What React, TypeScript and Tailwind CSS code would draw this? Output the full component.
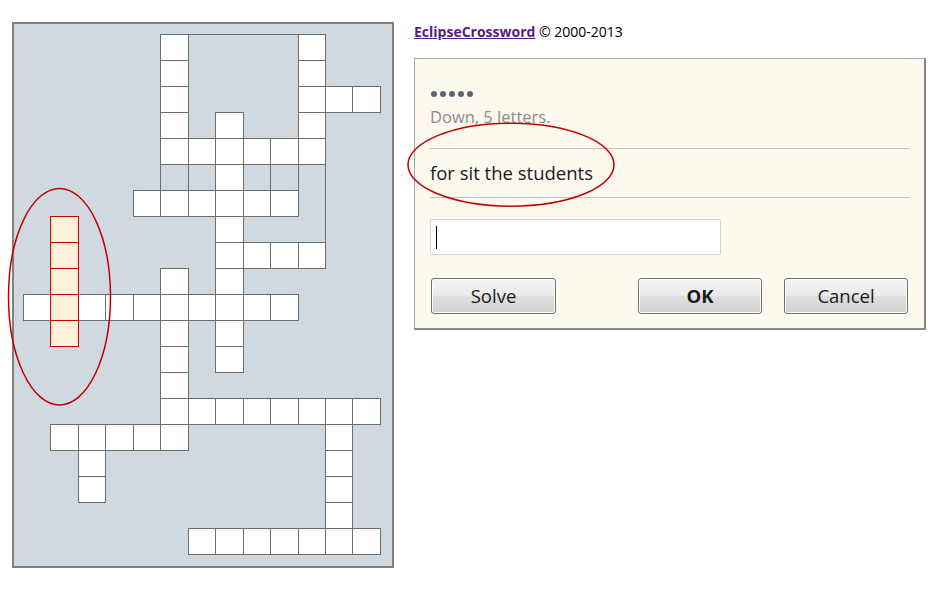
import React from "react";

// grid legend: "." empty, W white cell, H highlighted (active word),
// T gray with top edge, V gray with side edges, R gray with right edge
const rows = [
  ".....WTTTTW..",
  ".....W....W..",
  ".....W....WWW",
  ".....W.W..W..",
  ".....WWWWWW..",
  ".....VVWVVV..",
  "....WWWWWWR..",
  ".H.....W..R..",
  ".H.....WWWW..",
  ".H...W.W.....",
  "WHWWWWWWWW...",
  ".H...W.W.....",
  ".....W.W.....",
  ".....W.......",
  ".....WWWWWWWW",
  ".WWWWW.....W.",
  "..W........W.",
  "..W........W.",
  "...........W.",
  "......WWWWWWW",
];

function Cell({ kind }: { kind: string }) {
  if (kind === ".") return <div />;
  const base = "w-[calc(100%+1px)] h-[calc(100%+1px)]";
  if (kind === "W") return <div className={`${base} bg-white border border-[#6e6e6e]`} />;
  if (kind === "H") return <div className={`${base} relative z-10 bg-[#fff0da] border border-[#cc0000]`} />;
  if (kind === "T") return <div className={`${base} border-t border-[#6e6e6e]`} />;
  if (kind === "V") return <div className={`${base} border-x border-[#6e6e6e]`} />;
  return <div className={`${base} border-r border-[#6e6e6e]`} />;
}

function Button({ label, bold }: { label: string; bold?: boolean }) {
  return (
    <div
      className={
        "flex h-[36px] items-center justify-center rounded-[3px] border border-[#707070] text-[18.5px] text-[#1a1a1a] shadow-[inset_0_0_0_1px_#fbfbfb] bg-[linear-gradient(to_bottom,#f3f3f3_0%,#ececec_48%,#dedede_52%,#d2d2d2_100%)] " +
        (bold ? "font-bold" : "")
      }
    >
      {label}
    </div>
  );
}

export default function App() {
  return (
    <div className="relative flex gap-[20px] pl-[12px] pt-[22px] bg-white h-[600px] font-['Open_Sans',sans-serif]">
      {/* crossword board */}
      <div className="h-[546px] w-[382px] shrink-0 border-2 border-[#808080] bg-[#d0d8e0] pl-[9px] pt-[10px]">
        <div className="grid grid-cols-[repeat(13,27.46px)] grid-rows-[repeat(20,26px)]">
          {rows.map((r, ri) =>
            r.split("").map((k, ci) => <Cell key={`${ri}-${ci}`} kind={k} />)
          )}
        </div>
      </div>

      {/* clue panel */}
      <div className="w-[512px]">
        <div className="mt-px h-[18px] text-[14px] leading-[18px] text-black">
          <a className="font-bold text-[#551a8b] underline">EclipseCrossword</a> © 2000-2013
        </div>
        <div className="mt-[17px] h-[272px] border border-[#a8a8a8] border-r-2 border-b-2 border-r-[#888888] border-b-[#888888] bg-[#fdf9ef] pl-[15px] pr-[14px] pt-[32px]">
          <div className="flex gap-[3px] pl-px">
            {[0, 1, 2, 3, 4].map((i) => (
              <span key={i} className="h-[6px] w-[6px] rounded-full bg-[#5d6679]" />
            ))}
          </div>
          <div className="mt-[10px] text-[16.5px] leading-[20px] text-[#8c8c8c]">Down, 5 letters.</div>
          <div className="mt-[21px] border-t border-[#c2c2c2]" />
          <div className="mt-[12px] text-[18.5px] leading-[24px] text-[#1a1a1a]">for sit the students</div>
          <div className="mt-[12px] border-t border-[#c2c2c2]" />
          <div className="mt-[21px] flex h-[36px] w-[291px] items-center rounded-[2px] border border-[#d4d4d4] bg-white pl-[5px]">
            <span className="h-[23px] w-px bg-black" />
          </div>
          <div className="mt-[23px] flex pl-px pr-[2px]">
            <div className="w-[125px]">
              <Button label="Solve" />
            </div>
            <div className="ml-auto flex gap-[22px]">
              <div className="w-[124px]">
                <Button label="OK" bold />
              </div>
              <div className="w-[124px]">
                <Button label="Cancel" />
              </div>
            </div>
          </div>
        </div>
      </div>

      {/* red annotation ellipses */}
      <svg className="pointer-events-none absolute left-0 top-0 z-20" width="947" height="600">
        <ellipse cx="59.5" cy="296.7" rx="51" ry="108.3" fill="none" stroke="#c00000" strokeWidth="1.5" />
        <ellipse cx="511" cy="164.7" rx="103" ry="41.5" fill="none" stroke="#c00000" strokeWidth="1.5" />
      </svg>
    </div>
  );
}
